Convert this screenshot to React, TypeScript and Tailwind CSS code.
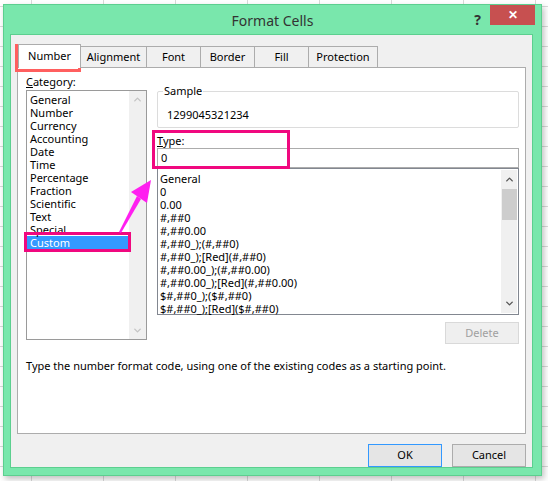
import { ChevronUp, ChevronDown } from 'lucide-react'

const categories = [
    'General',
    'Number',
    'Currency',
    'Accounting',
    'Date',
    'Time',
    'Percentage',
    'Fraction',
    'Scientific',
    'Text',
    'Special',
    'Custom',
]

const formats = [
    'General',
    '0',
    '0.00',
    '#,##0',
    '#,##0.00',
    '#,##0_);(#,##0)',
    '#,##0_);[Red](#,##0)',
    '#,##0.00_);(#,##0.00)',
    '#,##0.00_);[Red](#,##0.00)',
    '$#,##0_);($#,##0)',
    '$#,##0_);[Red]($#,##0)',
]

const tabs = ['Alignment', 'Font', 'Border', 'Fill', 'Protection']

export default function App() {
    return (
        <div className="relative w-[548px] h-[481px] overflow-hidden bg-white bg-[linear-gradient(to_right,#d9d9d9_1px,transparent_1px),linear-gradient(to_bottom,#d9d9d9_1px,transparent_1px)] bg-[size:72px_20px] bg-[position:31px_6px] pt-[4px] pl-[3px] font-['Noto_Sans',sans-serif] text-[11px] text-black">
            {/* ── Dialog window ── */}
            <div className="w-[539px] h-[472px] bg-[#79e7ac] border border-[#5ccf8f] flex flex-col shadow-[2px_3px_6px_rgba(0,0,0,0.25)]">
                {/* Title bar */}
                <div className="relative h-[29px] shrink-0 flex items-center justify-center">
                    <span className="text-[14px] text-[#333] mt-[1px]">Format Cells</span>
                    <span className="absolute right-[60px] top-[4px] text-[14px] font-bold text-[#333]">?</span>
                    <div className="absolute right-[6px] top-0 w-[45px] h-[20px] bg-[#c75050] flex items-center justify-center text-white text-[12px] font-bold">
                        ✕
                    </div>
                </div>

                {/* Client area */}
                <div className="ml-[6px] mr-[8px] mb-[7px] flex-1 bg-[#f0f0f0] border border-[#5ccf8f] px-[6px] pt-[8px] flex flex-col">
                    {/* Tabs */}
                    <div className="flex items-end h-[24px] pl-[1px]">
                        <div className="relative z-10 h-[24px] w-[63px] bg-white border border-[#acacac] border-b-0 flex items-center justify-center -mb-[1px]">
                            Number
                        </div>
                        {tabs.map((t) => (
                            <div
                                key={t}
                                className={`h-[21px] bg-[#f0f0f0] border border-[#acacac] border-b-0 -ml-[1px] flex items-center justify-center ${
                                    t === 'Alignment'
                                        ? 'w-[67px]'
                                        : t === 'Protection'
                                          ? 'w-[70px]'
                                          : 'w-[55px]'
                                }`}
                            >
                                {t}
                            </div>
                        ))}
                    </div>

                    {/* Tab page */}
                    <div className="h-[367px] bg-white border border-[#acacac] pl-[8px] pt-[6px] flex flex-col">
                        <div className="flex">
                            {/* Category column */}
                            <div className="w-[121px] flex flex-col">
                                <div className="h-[16px] leading-[16px]">
                                    <span className="underline">C</span>ategory:
                                </div>
                                <div className="h-[250px] border border-[#9a9a9a] flex">
                                    <div className="flex-1 pt-[2px]">
                                        {categories.map((c) => (
                                            <div
                                                key={c}
                                                className={`h-[13px] leading-[13px] pl-[3px] ${
                                                    c === 'Custom' ? 'bg-[#3399ff] text-white' : ''
                                                }`}
                                            >
                                                {c}
                                            </div>
                                        ))}
                                    </div>
                                    <div className="w-[17px] bg-[#f0f0f0] flex flex-col justify-between items-center py-[3px]">
                                        <ChevronUp className="size-[11px] text-[#c4c4c4]" strokeWidth={3} />
                                        <ChevronDown className="size-[11px] text-[#c4c4c4]" strokeWidth={3} />
                                    </div>
                                </div>
                            </div>

                            {/* Right column */}
                            <div className="ml-[10px] w-[362px] flex flex-col pt-[17px]">
                                {/* Sample group */}
                                <div className="relative h-[37px] border border-[#dcdcdc] rounded-[2px] pl-[9px] pt-[15px] leading-[15px]">
                                    <span className="absolute -top-[9px] left-[5px] bg-white px-[1px]">Sample</span>
                                    1299045321234
                                </div>

                                <div className="mt-[5px] h-[15px] leading-[15px]">
                                    <span className="underline">T</span>ype:
                                </div>
                                <div className="h-[20px] border border-[#acacac] pl-[3px] leading-[18px]">
                                    0
                                </div>

                                {/* Format list */}
                                <div className="h-[147px] border border-[#828790] flex">
                                    <div className="flex-1 pt-[3px] pl-[2px]">
                                        {formats.map((f, i) => (
                                            <div key={i} className="h-[13px] leading-[13px] whitespace-nowrap">
                                                {f}
                                            </div>
                                        ))}
                                    </div>
                                    <div className="w-[16px] mr-[1px] my-[1px] bg-[#f0f0f0] flex flex-col items-center">
                                        <ChevronUp className="size-[11px] text-[#555] mt-[4px]" strokeWidth={3} />
                                        <div className="mt-[4px] w-[15px] h-[31px] bg-[#cdcdcd]" />
                                        <div className="flex-1" />
                                        <ChevronDown className="size-[11px] text-[#555] mb-[4px]" strokeWidth={3} />
                                    </div>
                                </div>

                                <div className="flex justify-end mt-[7px]">
                                    <div className="w-[74px] h-[22px] bg-[#efefef] border border-[#d9d9d9] flex items-center justify-center text-[#a0a0a0]">
                                        Delete
                                    </div>
                                </div>
                            </div>
                        </div>

                        <div className="mt-[14px] h-[15px] leading-[15px]">
                            Type the number format code, using one of the existing codes as a starting point.
                        </div>
                    </div>

                    {/* Buttons */}
                    <div className="flex justify-end gap-[10px] mt-[10px]">
                        <div className="w-[74px] h-[23px] bg-[#e5e5e5] border border-[#3399ff] flex items-center justify-center">
                            OK
                        </div>
                        <div className="w-[74px] h-[23px] bg-[#e5e5e5] border border-[#acacac] flex items-center justify-center">
                            Cancel
                        </div>
                    </div>
                </div>
            </div>

            {/* ── Annotations ── */}
            <div className="absolute left-[15px] top-[44px] w-[66px] h-[28px] border-[3px] border-[#ff5f5f]" />
            <div className="absolute left-[24px] top-[232px] w-[107px] h-[20px] border-[3px] border-[#f0087f]" />
            <div className="absolute left-[152px] top-[130px] w-[138px] h-[39px] border-[3px] border-[#f0087f]" />
            <svg className="absolute left-0 top-0" width="548" height="481" viewBox="0 0 548 481">
                <polygon points="119,232 121,233 141,199 137,196" fill="#ff1ff0" />
                <polygon points="151,180 131,192 147,203" fill="#ff1ff0" />
            </svg>
        </div>
    )
}
